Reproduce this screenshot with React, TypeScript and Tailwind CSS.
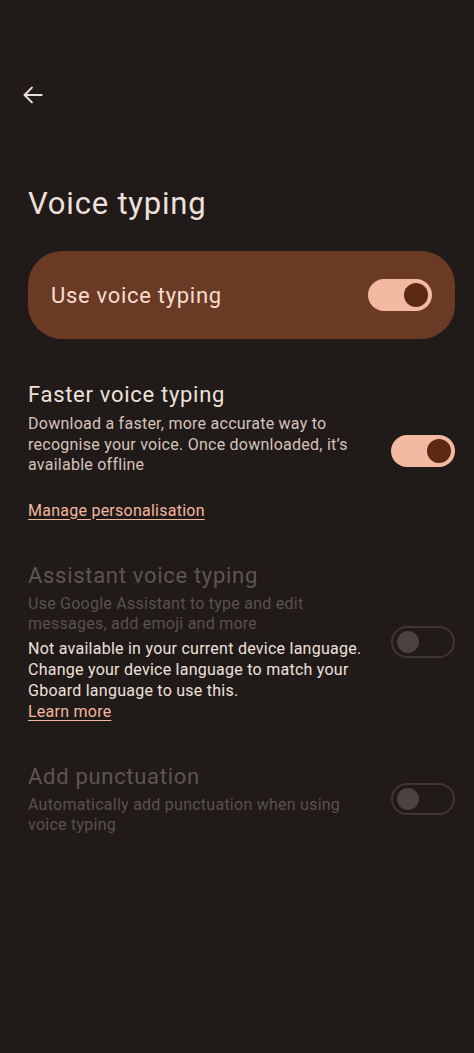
import React from "react";

const Toggle = ({ on }: { on: boolean }) => {
  if (on) {
    return (
      <div className="w-[64px] h-[32px] rounded-full bg-[#f4b9a1] flex items-center justify-end pr-[4px] shrink-0">
        <div className="w-[24px] h-[24px] rounded-full bg-[#5c2912]" />
      </div>
    );
  }
  return (
    <div className="w-[64px] h-[32px] rounded-full border-2 border-[#3f3633] flex items-center pl-[4px] shrink-0">
      <div className="w-[22px] h-[22px] rounded-full bg-[#4b413e]" />
    </div>
  );
};

export default function App() {
  const sans = { fontFamily: "Roboto, 'Noto Sans', sans-serif" };
  return (
    <div className="w-[474px] min-h-[1053px] bg-[#201a18]" style={sans}>
      <div className="pt-[82px] pl-[20px]">
        <svg width="26" height="26" viewBox="0 0 24 24" fill="none">
          <path d="M20 12H4.5M11 5.2L4.2 12L11 18.8" stroke="#ecdfda" strokeWidth="1.9" strokeLinecap="round" strokeLinejoin="round" />
        </svg>
      </div>
      <h1 className="mt-[76px] pl-[28px] text-[31px] leading-[40px] tracking-[0.8px] text-[#eee0db]">Voice typing</h1>
      <div className="ml-[28px] mr-[19px] mt-[27px] h-[88px] rounded-[34px] bg-[#6a3a25] flex items-center justify-between pl-[23px] pr-[23px]">
        <span className="text-[22px] tracking-[0.7px] text-[#f9ddd0]">Use voice typing</span>
        <Toggle on />
      </div>

      <div className="pl-[28px] pr-[19px]">
        <div className="mt-[42px] flex items-center justify-between">
          <div className="w-[350px]">
            <div className="text-[22px] leading-[28px] tracking-[0.7px] text-[#eee0db]">Faster voice typing</div>
            <div className="mt-[5px] text-[16px] leading-[20.5px] tracking-[0.25px] text-[#d7c3bb]">
              Download a faster, more accurate way to<br />recognise your voice. Once downloaded, it’s<br />available offline
            </div>
            <div className="mt-[25px] text-[16px] leading-[20px] tracking-[0.25px] text-[#f3b7a0] underline underline-offset-[3px]">Manage personalisation</div>
          </div>
          <Toggle on />
        </div>

        <div className="mt-[41px] flex items-center justify-between">
          <div className="w-[350px]">
            <div className="text-[22px] leading-[28px] tracking-[0.7px] text-[#5f5552]">Assistant voice typing</div>
            <div className="mt-[4px] text-[16px] leading-[20.5px] tracking-[0.25px] text-[#5b514d]">
              Use Google Assistant to type and edit<br />messages, add emoji and more
            </div>
            <div className="mt-[3px] text-[16px] leading-[21px] tracking-[0.25px] text-[#eee0db]">
              Not available in your current device language.<br />Change your device language to match your<br />Gboard language to use this.
            </div>
            <div className="text-[16px] leading-[21px] tracking-[0.25px] text-[#f3b7a0] underline underline-offset-[3px]">Learn more</div>
          </div>
          <Toggle on={false} />
        </div>

        <div className="mt-[41px] flex items-center justify-between">
          <div className="w-[350px]">
            <div className="text-[22px] leading-[28px] tracking-[0.7px] text-[#5f5552]">Add punctuation</div>
            <div className="mt-[4px] text-[16px] leading-[20.5px] tracking-[0.25px] text-[#5b514d]">
              Automatically add punctuation when using<br />voice typing
            </div>
          </div>
          <Toggle on={false} />
        </div>
      </div>
    </div>
  );
}
